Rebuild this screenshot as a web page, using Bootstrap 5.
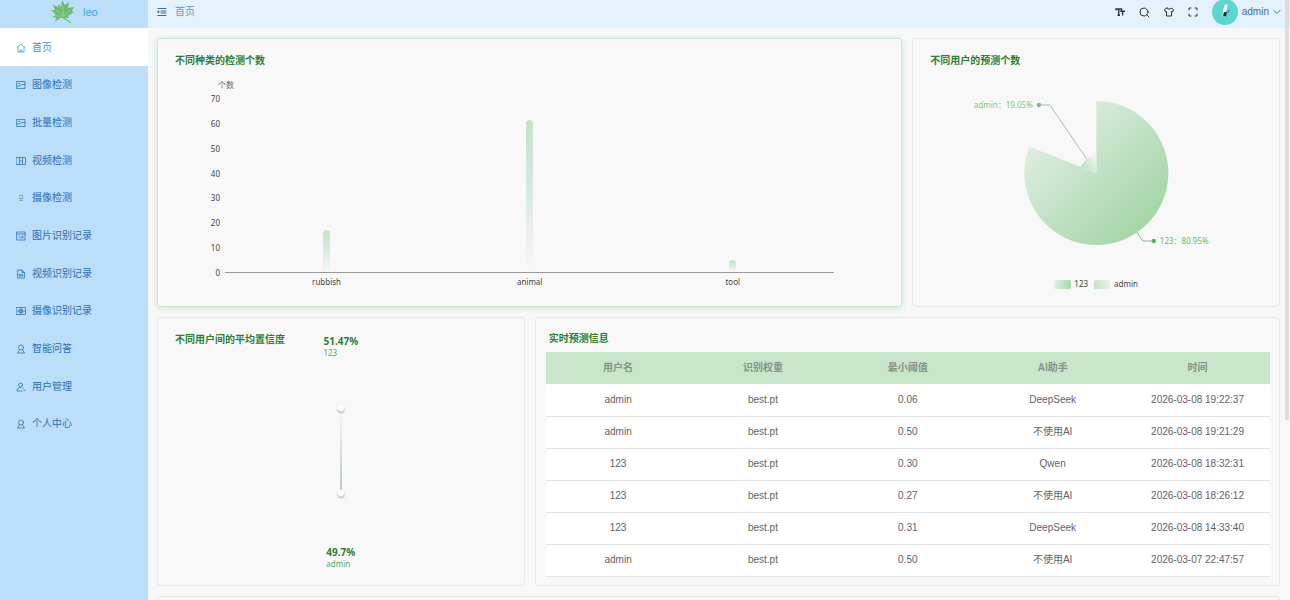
<!DOCTYPE html>
<html lang="zh-CN">
<head>
<meta charset="utf-8">
<meta name="viewport" content="width=device-width, initial-scale=1">
<title>首页</title>
<link rel="stylesheet" href="https://cdn.jsdelivr.net/npm/bootstrap@5.3.0/dist/css/bootstrap.min.css">
<style>
  body { font: 10px/12px "Liberation Sans", "Noto Sans CJK SC", sans-serif; background: #f8f8f9; color: #606266; }
  a { text-decoration: none; }
  svg { display: block; flex: none; }
  .ico { fill: none; stroke: currentColor; stroke-width: 1; stroke-linecap: round; stroke-linejoin: round; }
  .side { width: 148px; background: #bbdefb; }
  .brand { height: 28px; padding: 0 0 4px 51px; gap: 8px; font-size: 11px; color: #42a5ee; }
  .menu { display: grid; grid-template-rows: repeat(11, 1fr); height: 414px; }
  .menu a { display: flex; align-items: center; gap: 6px; height: 100%; padding: 2px 0 0 16px; color: #2a6fb8; }
  .menu a.active { background: #fff; color: #3d95d3; }
  .menu .ico { stroke-opacity: .75; }
  .topbar { height: 28px; padding: 0 9px 4px 9px; background: #e3f2fd; color: #303438; }
  .crumb { color: #7597ab; }
  .tools { gap: 14px; }
  .tools button { padding: 0; border: 0; background: none; color: inherit; line-height: 12px; }
  .tools .user { gap: 4px; color: #3a6cb4; }
  .board { padding: 10px 10px 0 9px; }
  .board > .row { --bs-gutter-x: 10px; --bs-gutter-y: 10px; }
  .panel { height: 269px; background: #f8f8f8; border: 1px solid #e5ebe8; border-radius: 3px; }
  .panel.lit { border-color: #cde6d5; box-shadow: 0 1px 6px #c8e6c9; }
  .panel h2 { margin: 0; font-size: 10px; line-height: 14px; font-weight: 700; color: #2e7d32; }
  .pad { padding: 15px 17px 0; }
  .plotfont { font-family: "Noto Sans", "Noto Sans CJK SC", sans-serif; font-size: 8px; line-height: 12px; color: #444; }
  .axis-name { margin: 11px 0 2px 43px; color: #666; }
  .yaxis { width: 50px; height: 186px; padding-right: 5px; }
  .plot { margin-right: 50px; padding-top: 6px; }
  .bars { height: 174px; border-bottom: 1px solid #999; }
  .bars div { flex: 1; height: 100%; display: flex; align-items: flex-end; justify-content: center; }
  .bars i { width: 7px; border-radius: 4px 4px 0 0; background: linear-gradient(#c5e3c9, #d5eadb 45%, #f8f8f800); }
  .xaxis { margin-top: 3px; }
  .xaxis span { flex: 1; text-align: center; }
  .pie { width: 100%; height: 200px; margin-top: 7px; }
  .legend { margin-top: 3px; gap: 6px; }
  .legend i { width: 17px; height: 9px; margin-right: 3px; border-radius: 2px; }
  .overlap { display: grid; }
  .overlap > * { grid-area: 1 / 1; }
  .stack { padding-top: 17px; }
  .stack b { display: block; font-size: 10px; line-height: 12px; color: #2e7d32; }
  .stack small { display: block; font-size: 8px; line-height: 11px; color: #5aa860; }
  .stack svg { margin: 44px 0; }
  .feed { padding: 14px 9px 0 10px; }
  .feed h2 { padding-left: 3px; margin-bottom: 6px; }
  .feed table { table-layout: fixed; text-align: center; background: #fff; }
  .feed th, .feed td { height: 32px; padding: 0; }
  .feed th { background: #c8e6c9; color: #879289; font-weight: 700; }
  .feed td { border-bottom: 1px solid #e3e5e8; }
  .thumb { top: 0; right: 1px; width: 4px; height: 70%; background: #dcdde0; border-radius: 0 0 2px 2px; }
</style>
</head>
<body>
<div class="d-flex vh-100 overflow-hidden position-relative">
  <aside class="side flex-shrink-0">
    <div class="brand d-flex align-items-center">
      <svg width="24" height="24" viewBox="0 0 24 24" aria-hidden="true"><path fill="#6cbd72" d="M11 0l3 5 4-3-1 6 6-1-2 4 2 1-6 4 1 2-4.500-.3 7 5-.7.800-8-5.500L9 18l-5 4 1-4.500L1 17l4-2-5-5 4 0L2 5l5 2 1-3 2 3z"/><path d="M5 10l8 6-2-11m2 11l6-6M5 16l8 0" fill="none" stroke="#a2d7a5" stroke-width=".7"/></svg>
      <span>leo</span>
    </div>
    <nav><ul class="menu list-unstyled m-0">
      <li><a class="active" href="#"><svg class="ico" width="10" height="10" viewBox="0 0 10 10"><path d="M1 4.500L5 1l4 3.500M2 4v5h6V4M4 9V7h2v2"/></svg>首页</a></li>
      <li><a href="#"><svg class="ico" width="10" height="10" viewBox="0 0 10 10"><path d="M1 1.500h8v7H1zM1 6h3l1.500-1.500H9M2.500 3.500h1.500"/></svg>图像检测</a></li>
      <li><a href="#"><svg class="ico" width="10" height="10" viewBox="0 0 10 10"><path d="M1 1.500h8v7H1zM1 6h3l1.500-1.500H9M2.500 3.500h1.500"/></svg>批量检测</a></li>
      <li><a href="#"><svg class="ico" width="10" height="10" viewBox="0 0 10 10"><path d="M.5 1.500h9v7h-9zM3.500 2v6M6.500 2v6M3.500 5h3"/></svg>视频检测</a></li>
      <li><a href="#"><svg class="ico" width="10" height="10" viewBox="0 0 10 10" opacity=".6"><path d="M3.500 2.500h3v3h-3zM3.500 7.500h3M5 5.500v2"/></svg>摄像检测</a></li>
      <li><a href="#"><svg class="ico" width="10" height="10" viewBox="0 0 10 10"><path d="M1 1h8v8H1zM1 3h8M3 5l1 2M6 5h1v2l-2-.5"/></svg>图片识别记录</a></li>
      <li><a href="#"><svg class="ico" width="10" height="10" viewBox="0 0 10 10"><path d="M2 1h4l2.500 2.500V9H2zM6 1v2.500h2.500M3.500 5.500h3.500v1.500H3.500z"/></svg>视频识别记录</a></li>
      <li><a href="#"><svg class="ico" width="10" height="10" viewBox="0 0 10 10"><path d="M.5 1.500h9v7h-9zM1 5h8M5 1.500v7M3.500 3.500h3v3h-3z"/></svg>摄像识别记录</a></li>
      <li><a href="#"><svg class="ico" width="10" height="10" viewBox="0 0 10 10"><circle cx="5" cy="3.500" r="2.500"/><path d="M3.500 5.500L1.500 9h7L6.500 5.500"/></svg>智能问答</a></li>
      <li><a href="#"><svg class="ico" width="10" height="10" viewBox="0 0 10 10"><circle cx="4.500" cy="3" r="2"/><path d="M6 9H1c0-2 1-3.500 3.500-3.500M6.500 6l1 1M8 8.500h1"/></svg>用户管理</a></li>
      <li><a href="#"><svg class="ico" width="10" height="10" viewBox="0 0 10 10"><circle cx="5" cy="3.500" r="2.500"/><path d="M3.500 5.500L1.500 9h7L6.500 5.500"/></svg>个人中心</a></li>
    </ul></nav>
  </aside>

  <div class="flex-grow-1 overflow-hidden">
    <header class="topbar d-flex align-items-center justify-content-between">
      <div class="crumb d-flex align-items-center gap-2">
        <svg class="ico" width="10" height="10" viewBox="0 0 10 10" style="color:#3f6f94"><path d="M1 1.500h8M4 4h5M4 6h5M1 8.500h8"/><path fill="currentColor" d="M1 4v2l1-1z"/></svg>
        <span>首页</span>
      </div>
      <div class="tools d-flex align-items-center">
        <button type="button" aria-label="字号"><svg width="10" height="10" viewBox="0 0 10 10"><path fill="none" stroke="currentColor" stroke-width="1.400" d="M1 3.500V2h5.500v1.500M3.700 2v6.500M2.500 8.300h2.500M6 5V4.300h3.500V5M7.600 4.500v4"/></svg></button>
        <button type="button" aria-label="搜索"><svg class="ico" width="11" height="11" viewBox="0 0 11 11"><circle cx="5" cy="5" r="4"/><path d="M8 8l2 2"/></svg></button>
        <button type="button" aria-label="主题"><svg class="ico" width="10" height="10" viewBox="0 0 10 10"><path d="M3 1L.5 2.500l1 2.500L2.500 4.500V9h5V4.500L8.500 5l1-2.500L7 1C6.500 2.500 3.500 2.500 3 1z"/></svg></button>
        <button type="button" aria-label="全屏"><svg class="ico" width="10" height="10" viewBox="0 0 10 10"><path d="M1 3V1h2M7 1h2v2M9 7v2H7M3 9H1V7"/></svg></button>
        <button type="button" class="user d-flex align-items-center">
          <svg width="26" height="26" viewBox="0 0 26 26" aria-hidden="true"><circle cx="13" cy="13" r="13" fill="#5cd6cf"/><path fill="#fff" d="M13 6l2-1 .5 3-2.500 7-2.500 2 .5-6z"/><path fill="#4a7f86" d="M14 13.500l4-3.500-1.500 4z"/><path fill="#14282c" d="M12 13l3 .5-1 4-3-1z"/></svg>
          <span>admin</span>
          <svg class="ico" width="8" height="8" viewBox="0 0 8 8"><path d="M1 2.500l3 3 3-3"/></svg>
        </button>
      </div>
    </header>

    <main class="board">
      <div class="row">
        <div class="col-8">
          <section class="panel lit pad">
            <h2>不同种类的检测个数</h2>
            <div class="plotfont">
              <div class="axis-name">个数</div>
              <div class="d-flex">
                <div class="yaxis d-flex flex-column justify-content-between text-end">
                  <span>70</span><span>60</span><span>50</span><span>40</span><span>30</span><span>20</span><span>10</span><span>0</span>
                </div>
                <div class="plot flex-grow-1">
                  <div class="bars d-flex">
                    <div><i style="height:24%"></i></div>
                    <div><i style="height:88%"></i></div>
                    <div><i style="height:7%"></i></div>
                  </div>
                  <div class="xaxis d-flex"><span>rubbish</span><span>animal</span><span>tool</span></div>
                </div>
              </div>
            </div>
          </section>
        </div>
        <div class="col-4">
          <section class="panel">
            <h2 class="pad pb-0">不同用户的预测个数</h2>
            <svg class="pie plotfont" viewBox="0 0 300 200">
              <defs>
                <linearGradient id="g1" x1="0" y1="0" x2="1" y2="1"><stop offset=".1" stop-color="#e4f1e7"/><stop offset=".45" stop-color="#c5e3c9"/><stop offset=".85" stop-color="#a5d6a7"/></linearGradient>
                <linearGradient id="g2" x1="0" y1="1" x2="1" y2="0"><stop stop-color="#b4ddb8"/><stop offset="1" stop-color="#f0f6f1"/></linearGradient>
              </defs>
              <path fill="url(#g1)" d="M150.500 98V26A72 72 0 1 1 83.500 71.700z"/>
              <path fill="url(#g2)" d="M150.500 98L134.700 91.800A17 17 0 0 1 150.500 81z"/>
              <path fill="none" stroke="#a9bdb0" d="M93 30h11L141 84"/><circle cx="93" cy="30" r="2.200" fill="#81b985"/>
              <path fill="none" stroke="#8fb598" d="M191 157l6 9h11"/><circle cx="208" cy="166" r="2.200" fill="#5aa860"/>
              <text x="87" y="33" text-anchor="end" fill="#81c784">admin：19.05%</text>
              <text x="214" y="169" fill="#66bb6a">123：80.95%</text>
            </svg>
            <div class="legend plotfont d-flex justify-content-center">
              <span class="d-flex align-items-center"><i style="background:linear-gradient(100deg,#e0f1e4,#a5d6a7)"></i>123</span>
              <span class="d-flex align-items-center"><i style="background:linear-gradient(80deg,#bfe0c3,#eef5ef)"></i>admin</span>
            </div>
          </section>
        </div>

        <div class="col-4">
          <section class="panel overlap">
            <h2 class="pad">不同用户间的平均置信度</h2>
            <div class="stack plotfont d-flex flex-column align-items-center">
              <div><b>51.47%</b><small>123</small></div>
              <svg width="16" height="100" viewBox="0 0 16 100">
                <defs>
                  <linearGradient id="g3" x1="0" y1="0" x2="0" y2="1"><stop stop-color="#f0f3f1"/><stop offset="1" stop-color="#b5cbbd"/></linearGradient>
                  <linearGradient id="g4" x1="0" y1="0" x2="0" y2="1"><stop offset=".2" stop-color="#f1f3f2"/><stop offset="1" stop-color="#c3ceca"/></linearGradient>
                </defs>
                <rect x="7" y="14" width="2" height="74" fill="url(#g3)"/>
                <circle cx="8" cy="7" r="4.500" fill="url(#g4)"/><circle cx="8" cy="6" r="3" fill="#fff"/>
                <circle cx="8" cy="92" r="4.500" fill="url(#g4)"/><circle cx="8" cy="91" r="3" fill="#fff"/>
              </svg>
              <div><b>49.7%</b><small>admin</small></div>
            </div>
          </section>
        </div>
        <div class="col-8">
          <section class="panel feed">
            <h2>实时预测信息</h2>
            <table class="w-100">
              <thead><tr><th>用户名</th><th>识别权重</th><th>最小阈值</th><th>AI助手</th><th>时间</th></tr></thead>
              <tbody>
                <tr><td>admin</td><td>best.pt</td><td>0.06</td><td>DeepSeek</td><td>2026-03-08 19:22:37</td></tr>
                <tr><td>admin</td><td>best.pt</td><td>0.50</td><td>不使用AI</td><td>2026-03-08 19:21:29</td></tr>
                <tr><td>123</td><td>best.pt</td><td>0.30</td><td>Qwen</td><td>2026-03-08 18:32:31</td></tr>
                <tr><td>123</td><td>best.pt</td><td>0.27</td><td>不使用AI</td><td>2026-03-08 18:26:12</td></tr>
                <tr><td>123</td><td>best.pt</td><td>0.31</td><td>DeepSeek</td><td>2026-03-08 14:33:40</td></tr>
                <tr><td>admin</td><td>best.pt</td><td>0.50</td><td>不使用AI</td><td>2026-03-07 22:47:57</td></tr>
              </tbody>
            </table>
          </section>
        </div>
        <div class="col-12"><section class="panel"></section></div>
      </div>
    </main>
  </div>
  <div class="thumb position-absolute"></div>
</div>
<script src="https://cdn.jsdelivr.net/npm/bootstrap@5.3.0/dist/js/bootstrap.bundle.min.js"></script>
</body>
</html>
